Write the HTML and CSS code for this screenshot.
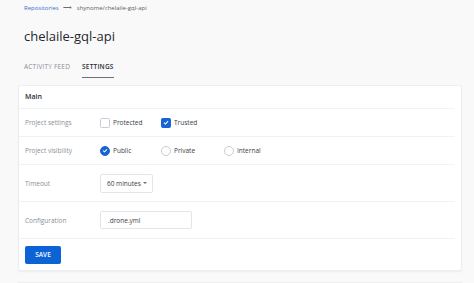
FILE: index.html
```html
<!DOCTYPE html>
<html lang="en">
<head>
    <meta charset="UTF-8">
    <meta name="viewport" content="width=device-width, initial-scale=1.0">
    <title>chelaile-gql-api - Settings</title>
    <link rel="stylesheet" href="styles.css">
</head>
<body>
    <div class="page">
        <div class="breadcrumb">
            <a href="#">Repositories</a>
            <span class="arrow">&#10230;</span>
            <span>shynome/chelaile-gql-api</span>
        </div>
        <h1>chelaile-gql-api</h1>
        <div class="tabs">
            <span class="tab">ACTIVITY FEED</span>
            <span class="tab active">SETTINGS</span>
        </div>
    </div>

    <div class="card">
        <div class="card-header">Main</div>

        <div class="row row-short">
            <div class="label">Project settings</div>
            <div class="controls">
                <label class="option opt-first"><span class="box"></span>Protected</label>
                <label class="option"><span class="box checked">
                    <svg viewBox="0 0 10 10"><path d="M2.5 5.2 L4.3 7 L7.6 3.4" fill="none" stroke="#fff" stroke-width="1.3"/></svg>
                </span>Trusted</label>
            </div>
        </div>

        <div class="row row-short">
            <div class="label">Project visibility</div>
            <div class="controls">
                <label class="option opt-first"><span class="radio checked">
                    <svg viewBox="0 0 10 10"><path d="M2.7 5.1 L4.4 6.7 L7.4 3.6" fill="none" stroke="#fff" stroke-width="1.3"/></svg>
                </span>Public</label>
                <label class="option opt-mid"><span class="radio"></span>Private</label>
                <label class="option"><span class="radio"></span>Internal</label>
            </div>
        </div>

        <div class="row">
            <div class="label">Timeout</div>
            <div class="controls">
                <div class="select">60 minutes <span class="caret"></span></div>
            </div>
        </div>

        <div class="row">
            <div class="label">Configuration</div>
            <div class="controls">
                <div class="text-input">.drone.yml</div>
            </div>
        </div>

        <div class="card-footer">
            <button class="save">SAVE</button>
        </div>
    </div>
    <div class="next-card"></div>
</body>
</html>
```

FILE: styles.css
```css
body {
    margin: 0;
    padding: 0;
    background-color: #f9f9fa;
    font-family: "Open Sans", "Noto Sans", sans-serif;
    color: #2b2f36;
}

.page {
    padding: 0 24px;
}

.breadcrumb {
    height: 16px;
    line-height: 16px;
    font-size: 6px;
    color: #5a5f68;
}

.breadcrumb a {
    color: #3a6fd0;
    text-decoration: none;
}

.breadcrumb .arrow {
    margin: 0 3px;
    color: #6a6f78;
}

h1 {
    margin: 0;
    height: 40px;
    line-height: 40px;
    font-size: 13px;
    font-weight: 400;
    color: #24272d;
}

.tabs {
    display: flex;
    gap: 12px;
    height: 29px;
}

.tab {
    height: 21px;
    line-height: 22px;
    font-size: 6.5px;
    letter-spacing: 0.2px;
    color: #8a8f98;
    font-weight: 500;
}

.tab.active {
    color: #2b2f36;
    font-weight: 600;
    border-bottom: 1px solid #6a6f78;
}

.card {
    margin: 0 12px 0 18px;
    padding-right: 6px;
    background-color: #fff;
    border: 1px solid #eceef0;
    border-radius: 2px;
    box-shadow: 0 1px 2px rgba(0, 0, 0, 0.05);
}

.card-header {
    height: 22px;
    line-height: 22px;
    padding-left: 6px;
    font-size: 7px;
    font-weight: 600;
    border-bottom: 1px solid #f1f2f4;
}

.row {
    display: flex;
    align-items: center;
    height: 36px;
    border-bottom: 1px solid #f1f2f4;
}

.row-short {
    height: 27px;
}

.label {
    width: 75px;
    padding-left: 6px;
    font-size: 6.5px;
    color: #8a8f98;
}

.controls {
    display: flex;
    align-items: center;
    font-size: 6.5px;
    color: #3a3e45;
}

.option {
    display: flex;
    align-items: center;
    gap: 3px;
}

.opt-first {
    width: 61px;
}

.opt-mid {
    width: 63px;
}

.box,
.radio {
    display: flex;
    align-items: center;
    justify-content: center;
    width: 8px;
    height: 8px;
    border: 1px solid #c9ccd2;
    border-radius: 1.5px;
    background: #fff;
}

.radio {
    border-radius: 50%;
}

.box.checked,
.radio.checked {
    background-color: #1a63d3;
    border-color: #1a63d3;
}

.box svg,
.radio svg {
    width: 9px;
    height: 9px;
}

.select {
    display: flex;
    align-items: center;
    width: 40px;
    height: 17px;
    padding: 0 5px 0 6px;
    border: 1px solid #e3e5e8;
    border-radius: 2px;
    font-size: 6.5px;
    color: #3a3e45;
}

.caret {
    margin-left: auto;
    width: 0;
    height: 0;
    border-left: 2px solid transparent;
    border-right: 2px solid transparent;
    border-top: 2px solid #6a6f78;
}

.text-input {
    display: flex;
    align-items: center;
    width: 83px;
    height: 16px;
    padding-left: 7px;
    border: 1px solid #e3e5e8;
    border-radius: 2px;
    font-size: 6.5px;
    color: #3a3e45;
}

.card-footer {
    height: 31px;
    padding-left: 6px;
    display: flex;
    align-items: center;
}

.save {
    width: 36px;
    height: 18px;
    padding: 0;
    border: none;
    border-radius: 2px;
    background-color: #0b63d6;
    color: #fff;
    font-family: "Open Sans", "Noto Sans", sans-serif;
    font-size: 6.5px;
    font-weight: 600;
}

.next-card {
    margin: 11px 12px 0 18px;
    height: 4px;
    border-top: 1px solid #eceef0;
    background-color: #fff;
}
```
